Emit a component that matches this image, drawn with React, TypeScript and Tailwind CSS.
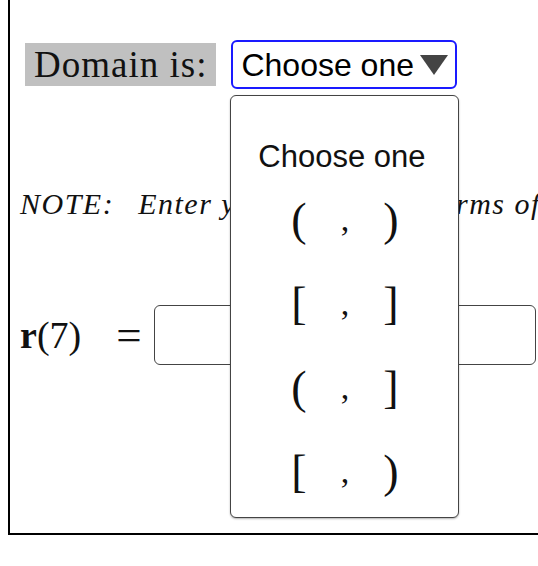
import React from "react";

const serif = { fontFamily: '"Liberation Serif", "DejaVu Serif", serif' };
const sans = { fontFamily: '"Liberation Sans", Arial, sans-serif' };

const options = ["( , )", "[ , ]", "( , ]", "[ , )"];

function Interval({ label }: { label: string }) {
  const [open, , close] = label.split(" ");
  return (
    <div className="h-[84px] flex items-center justify-center text-[#111]" style={serif}>
      <span className="w-[46px] text-center text-[46px] leading-none">{open}</span>
      <span className="w-[46px] text-center text-[34px] leading-none">,</span>
      <span className="w-[46px] text-center text-[46px] leading-none">{close}</span>
    </div>
  );
}

export default function App() {
  return (
    <div className="w-[538px] h-[566px] overflow-hidden bg-white">
      <div className="ml-2 w-[600px] h-[535px] border-l-2 border-b-2 border-black pl-[10px]">
        {/* Domain select */}
        <div className="flex items-center pt-[40px] pl-[5px]">
          <span className="h-[43px] px-[9px] bg-[#c0c0c0] flex items-center text-[37px] leading-none tracking-[1px] text-[#111]" style={serif}>
            Domain is:
          </span>
          <div className="relative ml-[15px]">
            <div className="w-[226px] h-[49px] border-2 border-[#1a1aff] rounded-md flex items-center pl-[8px] pr-[6px]" style={sans}>
              <span className="text-[32px] leading-none text-black">Choose one</span>
              <svg className="ml-auto" width="30" height="22" viewBox="0 0 30 22">
                <path d="M1 1 H29 L15 21 Z" fill="#444" />
              </svg>
            </div>
            <div className="absolute top-[55px] left-[-1px] w-[229px] h-[423px] border border-[#444] rounded-md bg-white shadow-[0_1px_2px_rgba(0,0,0,0.3)] z-10">
              <div className="pt-[40px] h-[80px] flex items-center justify-center pr-[6px] text-[31px] leading-none text-[#111]" style={sans}>
                Choose one
              </div>
              <div className="mt-[2px]">
                {options.map((o) => (
                  <Interval key={o} label={o} />
                ))}
              </div>
            </div>
          </div>
        </div>

        {/* Note */}
        <div className="mt-[94px] h-[40px] flex items-center whitespace-nowrap italic text-[30px] tracking-[1.5px] text-[#111]" style={serif}>
          <span>NOTE:</span>
          <span className="ml-[24px]">Enter your answer in terms of t.</span>
        </div>

        {/* r(7) input */}
        <div className="mt-[82px] flex items-center">
          <span className="text-[38px] text-[#111]" style={serif}>
            <b>r</b>(7)
          </span>
          <span className="ml-[35px] text-[45px] leading-none text-[#111]" style={serif}>=</span>
          <div className="ml-[12px] w-[382px] h-[60px] border border-[#444] rounded-md bg-white"></div>
        </div>
      </div>
    </div>
  );
}
